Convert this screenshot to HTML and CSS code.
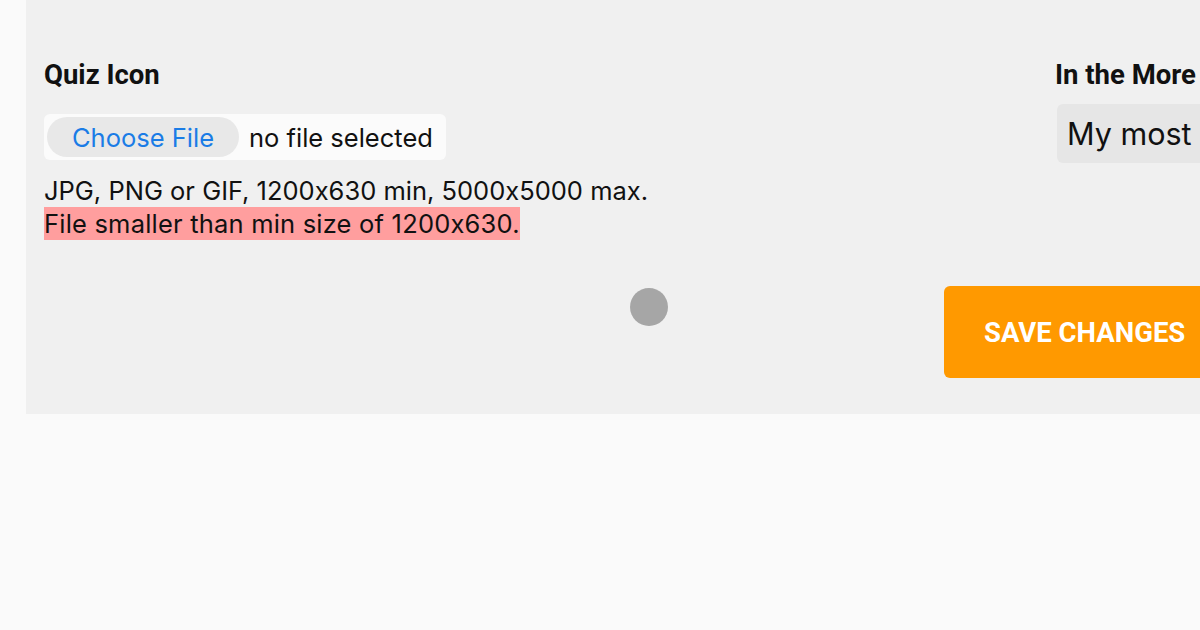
FILE: index.html
```html
<!DOCTYPE html>
<html>
<head>
<meta charset="utf-8">
<link rel="stylesheet" href="styles.css">
</head>
<body>
<div class="panel">
  <div class="fields">
    <div class="field field-icon">
      <div class="label">Quiz Icon</div>
      <div class="file-input">
        <span class="file-btn">Choose File</span>
        <span class="file-name">no file selected</span>
      </div>
      <div class="hint">
        <span class="hint-line">JPG, PNG or GIF, 1200x630 min, 5000x5000 max.</span><br>
        <span class="hint-line error">File smaller than min size of 1200x630.</span>
      </div>
    </div>
    <div class="field field-more">
      <div class="label">In the More</div>
      <div class="select">My most</div>
    </div>
  </div>
  <div class="actions">
    <div class="spinner"></div>
    <button class="save">SAVE CHANGES</button>
  </div>
</div>
</body>
</html>
```

FILE: styles.css
```css
html, body {
  margin: 0;
  padding: 0;
  background: #fafafa;
  overflow: hidden;
  width: 1200px;
  height: 630px;
}
.panel {
  margin-left: 26px;
  width: 1174px;
  height: 414px;
  box-sizing: border-box;
  background: #f0f0f0;
  padding: 59px 0 0 18px;
  overflow: hidden;
  font-feature-settings: "calt" 0;
}
.fields {
  display: flex;
}
.field-icon {
  width: 1011px;
  flex: none;
}
.field-more {
  flex: 1;
  min-width: 0;
  white-space: nowrap;
}
.label {
  font-family: Roboto, sans-serif;
  font-weight: 700;
  font-size: 27.5px;
  line-height: 31px;
  color: #111;
  white-space: nowrap;
}
.file-input {
  margin-top: 24px;
  display: inline-flex;
  align-items: center;
  width: 402px;
  height: 46px;
  box-sizing: border-box;
  padding: 3px;
  background: #fbfbfb;
  border-radius: 6px;
  font-family: Inter, "Liberation Sans", sans-serif;
  font-size: 25.5px;
}
.file-btn {
  height: 40px;
  width: 192px;
  border-radius: 20px;
  background: #e8e8e8;
  color: #1a7ce6;
  display: flex;
  align-items: center;
  justify-content: center;
}
.file-name {
  margin-left: 10px;
  color: #111;
}
.hint {
  margin-top: 14px;
  font-family: Inter, "Liberation Sans", sans-serif;
  font-size: 25.5px;
  line-height: 33px;
  color: #111;
}
.hint-line {
  display: inline-block;
  line-height: 33px;
}
.error {
  background: #ff9e9e;
  letter-spacing: 0.2px;
}
.select {
  margin-top: 14px;
  margin-left: 2px;
  height: 59px;
  padding-left: 10px;
  background: #e6e6e6;
  border-radius: 6px 0 0 6px;
  font-family: Inter, "Liberation Sans", sans-serif;
  font-size: 30.5px;
  line-height: 59px;
  color: #111;
}
.actions {
  display: flex;
  align-items: flex-start;
  margin-top: 46px;
}
.spinner {
  width: 38px;
  height: 38px;
  margin-top: 2px;
  border-radius: 50%;
  background: #a6a6a6;
  margin-left: 586px;
}
.save {
  margin-left: 276px;
  flex: 1;
  height: 92px;
  border: none;
  border-radius: 6px 0 0 6px;
  background: #ff9900;
  color: #fff;
  font-family: Roboto, sans-serif;
  font-weight: 700;
  font-size: 27.5px;
  text-align: left;
  padding: 0 0 0 40px;
  white-space: nowrap;
}
```
